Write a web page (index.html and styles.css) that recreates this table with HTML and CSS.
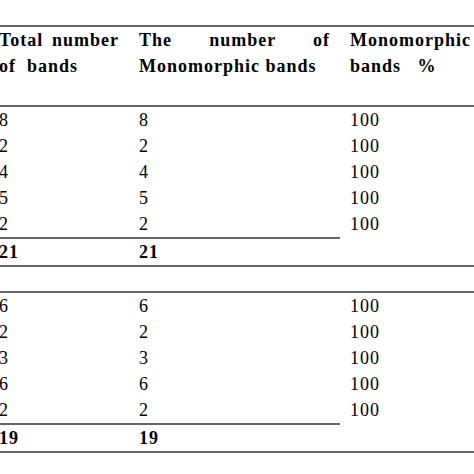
FILE: index.html
```html
<!DOCTYPE html>
<html>
<head>
<meta charset="utf-8">
<link rel="stylesheet" href="styles.css">
</head>
<body>
<div class="frame">
<table class="bands">
  <colgroup>
    <col class="w1"><col class="w2"><col class="w3">
  </colgroup>
  <thead>
    <tr class="head">
      <th>Total number of&nbsp; bands</th>
      <th>The number of Monomorphic bands</th>
      <th>Monomorphic bands&nbsp;&nbsp; %</th>
    </tr>
  </thead>
  <tbody class="sec">
    <tr class="first"><td>8</td><td>8</td><td>100</td></tr>
    <tr><td>2</td><td>2</td><td>100</td></tr>
    <tr><td>4</td><td>4</td><td>100</td></tr>
    <tr><td>5</td><td>5</td><td>100</td></tr>
    <tr><td>2</td><td>2</td><td>100</td></tr>
    <tr class="total"><td>21</td><td>21</td><td></td></tr>
  </tbody>
  <tbody class="gap">
    <tr><td></td><td></td><td></td></tr>
  </tbody>
  <tbody class="sec">
    <tr class="first"><td>6</td><td>6</td><td>100</td></tr>
    <tr><td>2</td><td>2</td><td>100</td></tr>
    <tr><td>3</td><td>3</td><td>100</td></tr>
    <tr><td>6</td><td>6</td><td>100</td></tr>
    <tr><td>2</td><td>2</td><td>100</td></tr>
    <tr class="total"><td>19</td><td>19</td><td></td></tr>
  </tbody>
</table>
</div>
</body>
</html>
```
FILE: styles.css
```css
html, body {
  margin: 0;
  padding: 0;
  background: #ffffff;
}

.frame {
  width: 474px;
  height: 474px;
  overflow: hidden;
  padding-top: 25px;
  box-sizing: border-box;
}

.bands {
  border-collapse: collapse;
  table-layout: fixed;
  width: 520px;
  margin-left: -11px;
  font-family: "Liberation Serif", "Times New Roman", serif;
  font-size: 18px;
  letter-spacing: 1px;
  color: #000000;
}

.w1 { width: 140px; }
.w2 { width: 211px; }
.w3 { width: 169px; }

.bands th,
.bands td {
  padding: 0 10px;
  line-height: 26px;
  height: 26px;
  text-align: left;
  vertical-align: top;
}

.head th {
  font-weight: bold;
  text-align: justify;
  padding-bottom: 26px;
  border-top: 2px solid #666666;
  border-bottom: 2px solid #666666;
}

.sec .first td {
  border-top: 2px solid #666666;
}

.total td {
  font-weight: bold;
  border-bottom: 2px solid #666666;
}

.total td:nth-child(1),
.total td:nth-child(2) {
  border-top: 2px solid #666666;
}

.gap td {
  height: 24px;
}
```
